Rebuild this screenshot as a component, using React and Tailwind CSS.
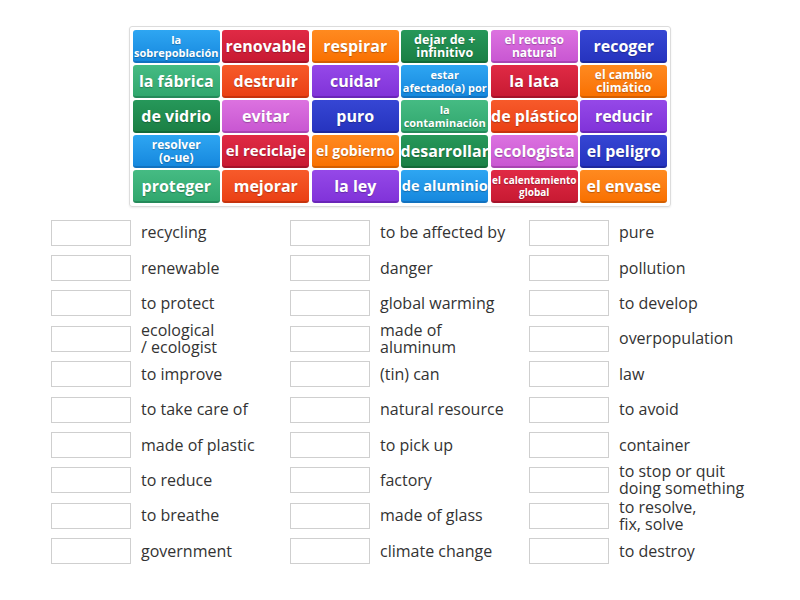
import React from 'react';

const COLORS = {
    blue: 'from-[#2ea6f2] to-[#1688de] border-[#1272c0]',
    red: 'from-[#e02a45] to-[#c81a33] border-[#a5132a]',
    orange: 'from-[#ff8a1f] to-[#f97100] border-[#d45f00]',
    dgreen: 'from-[#26985a] to-[#1b8045] border-[#146a38]',
    pink: 'from-[#dc72e0] to-[#c957d2] border-[#a944b2]',
    navy: 'from-[#3646d4] to-[#2634bf] border-[#1d289e]',
    teal: 'from-[#45bb83] to-[#31a76e] border-[#258a5a]',
    rorange: 'from-[#f75a2a] to-[#ea4014] border-[#c7330d]',
    purple: 'from-[#9548e8] to-[#8133d9] border-[#6a25b8]',
};

// [label, colour, text size class]
const TILES = [
    ['la\nsobrepoblación', 'blue', 'text-[11px] leading-[13px]'],
    ['renovable', 'red', 'text-[16px]'],
    ['respirar', 'orange', 'text-[16px]'],
    ['dejar de +\ninfinitivo', 'dgreen', 'text-[12.5px] leading-[13px]'],
    ['el recurso\nnatural', 'pink', 'text-[12px] leading-[13px]'],
    ['recoger', 'navy', 'text-[16px]'],

    ['la fábrica', 'teal', 'text-[16px]'],
    ['destruir', 'rorange', 'text-[16px]'],
    ['cuidar', 'purple', 'text-[16px]'],
    ['estar\nafectado(a) por', 'blue', 'text-[11px] leading-[13px]'],
    ['la lata', 'red', 'text-[16px]'],
    ['el cambio\nclimático', 'orange', 'text-[12px] leading-[13px]'],

    ['de vidrio', 'dgreen', 'text-[16px]'],
    ['evitar', 'pink', 'text-[16px]'],
    ['puro', 'navy', 'text-[16px]'],
    ['la\ncontaminación', 'teal', 'text-[11px] leading-[13px]'],
    ['de plástico', 'rorange', 'text-[16px]'],
    ['reducir', 'purple', 'text-[16px]'],

    ['resolver\n(o-ue)', 'blue', 'text-[12px] leading-[13px]'],
    ['el reciclaje', 'red', 'text-[15px]'],
    ['el gobierno', 'orange', 'text-[14px]'],
    ['desarrollar', 'dgreen', 'text-[16px]'],
    ['ecologista', 'pink', 'text-[16px]'],
    ['el peligro', 'navy', 'text-[16px]'],

    ['proteger', 'teal', 'text-[16px]'],
    ['mejorar', 'rorange', 'text-[16px]'],
    ['la ley', 'purple', 'text-[16px]'],
    ['de aluminio', 'blue', 'text-[14.5px]'],
    ['el calentamiento\nglobal', 'red', 'text-[10px] leading-[12px]'],
    ['el envase', 'orange', 'text-[16px]'],
];

const COLUMNS = [
    ['recycling', 'renewable', 'to protect', 'ecological\n/ ecologist', 'to improve', 'to take care of', 'made of plastic', 'to reduce', 'to breathe', 'government'],
    ['to be affected by', 'danger', 'global warming', 'made of\naluminum', '(tin) can', 'natural resource', 'to pick up', 'factory', 'made of glass', 'climate change'],
    ['pure', 'pollution', 'to develop', 'overpopulation', 'law', 'to avoid', 'container', 'to stop or quit\ndoing something', 'to resolve,\nfix, solve', 'to destroy'],
];

const Tile = ({ label, color, size }) => (
    <div className={`h-[33px] rounded-[3px] border-b-2 bg-linear-to-b ${COLORS[color]} flex items-center justify-center text-center whitespace-pre overflow-hidden text-white font-bold ${size} [text-shadow:0_1px_1px_rgba(0,0,0,0.25)]`}>
        {label}
    </div>
);

const Row = ({ text }) => (
    <div className="h-[35.4px] flex items-center">
        <div className="w-[80px] h-[26px] border border-[#cfcfcf] bg-white flex-shrink-0" />
        <div className="ml-[10px] text-[16px] leading-[17px] text-[#333] whitespace-pre-line">{text}</div>
    </div>
);

export default function App() {
    return (
        <div className="w-[800px] h-[600px] bg-white font-['Open_Sans',sans-serif]">
            <div className="pt-[26px] flex justify-center">
                <div className="border border-[#dcdcdc] rounded-[3px] p-[3px] shadow-[0_1px_2px_rgba(0,0,0,0.08)]">
                    <div className="grid grid-cols-[repeat(6,87px)] gap-x-[2.5px] gap-y-[2px]">
                        {TILES.map(([label, color, size]) => (
                            <Tile key={label} label={label} color={color} size={size} />
                        ))}
                    </div>
                </div>
            </div>

            <div className="flex pl-[51px] pt-[8px]">
                {COLUMNS.map((col, i) => (
                    <div key={i} className="w-[239px]">
                        {col.map((t) => <Row key={t} text={t} />)}
                    </div>
                ))}
            </div>
        </div>
    );
}
